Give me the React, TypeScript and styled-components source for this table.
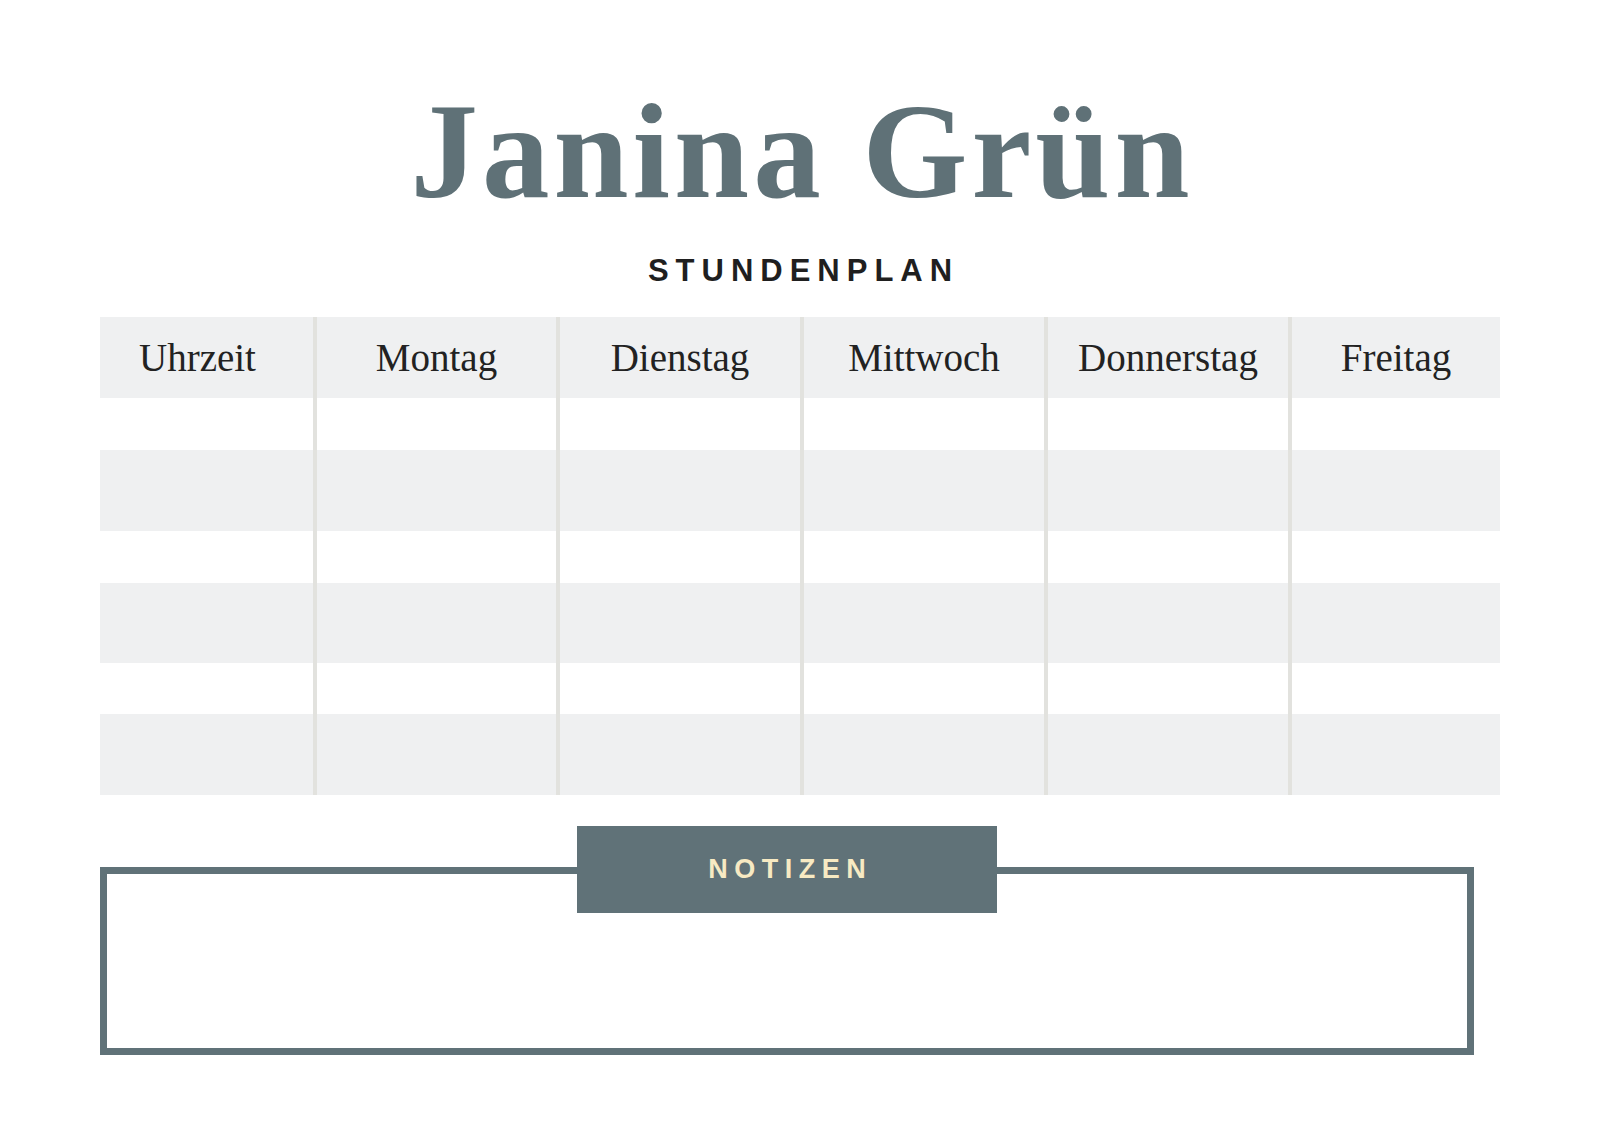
import React, { FC } from "react";
import styled, { createGlobalStyle } from "styled-components";

const GlobalStyle = createGlobalStyle`
  html, body {
    margin: 0;
    padding: 0;
    background: #ffffff;
  }
  body {
    font-family: "Liberation Sans", Arial, sans-serif;
  }
`;

const Page = styled.div`
  width: 1400px;
  margin: 0 auto;
  padding: 84px 0 60px;
  display: flex;
  flex-direction: column;
  align-items: stretch;
`;

const Title = styled.h1`
  margin: 0;
  font-family: "Liberation Serif", "Times New Roman", serif;
  font-weight: 700;
  font-size: 135px;
  line-height: 1;
  color: #5f7177;
  text-align: center;
  letter-spacing: 4px;
  padding-left: 4px;
`;

const Subtitle = styled.div`
  margin-top: 36px;
  font-family: "Liberation Sans", Arial, sans-serif;
  font-weight: 700;
  font-size: 31px;
  line-height: 1;
  letter-spacing: 7px;
  padding-left: 7px;
  color: #1f1f1f;
  text-align: center;
`;

const Table = styled.div`
  margin-top: 31px;
  display: flex;
  flex-direction: column;
`;

const Row = styled.div<{ $shade: boolean; $height: number }>`
  display: grid;
  grid-template-columns: 213px 243px 244px 244px 244px 212px;
  height: ${({ $height }) => $height}px;
  background: ${({ $shade }) => ($shade ? "#eff0f1" : "#ffffff")};
`;

const Cell = styled.div<{ $first?: boolean }>`
  display: flex;
  align-items: center;
  justify-content: center;
  border-left: ${({ $first }) => ($first ? "none" : "4px solid #e2e2de")};
  padding-right: ${({ $first }) => ($first ? "18px" : "0")};
  font-family: "Liberation Serif", "Times New Roman", serif;
  font-size: 39px;
  line-height: 1;
  color: #222222;
`;

const Notes = styled.section`
  margin-top: 31px;
  width: 1374px;
  display: flex;
  flex-direction: column;
  align-items: center;
`;

const NotesTab = styled.div`
  position: relative;
  z-index: 1;
  width: 420px;
  height: 87px;
  background: #607278;
  display: flex;
  align-items: center;
  justify-content: center;
  font-family: "Liberation Sans", Arial, sans-serif;
  font-weight: 700;
  font-size: 27px;
  line-height: 1;
  letter-spacing: 6.5px;
  padding-left: 6.5px;
  box-sizing: border-box;
  color: #f7eac3;
`;

const NotesBox = styled.div`
  align-self: stretch;
  margin-top: -46px;
  height: 188px;
  box-sizing: border-box;
  border: 7px solid #607278;
  background: #ffffff;
`;

const days = ["Uhrzeit", "Montag", "Dienstag", "Mittwoch", "Donnerstag", "Freitag"];
const bodyRows = [
  { shade: false, height: 52 },
  { shade: true, height: 81 },
  { shade: false, height: 52 },
  { shade: true, height: 80 },
  { shade: false, height: 51 },
  { shade: true, height: 81 },
];

const App: FC = () => {
  return (
    <>
      <GlobalStyle />
      <Page>
        <Title>Janina Grün</Title>
        <Subtitle>STUNDENPLAN</Subtitle>
        <Table>
          <Row $shade $height={81}>
            {days.map((d, i) => (
              <Cell key={d} $first={i === 0}>
                {d}
              </Cell>
            ))}
          </Row>
          {bodyRows.map((r, ri) => (
            <Row key={ri} $shade={r.shade} $height={r.height}>
              {days.map((d, i) => (
                <Cell key={d} $first={i === 0} />
              ))}
            </Row>
          ))}
        </Table>
        <Notes>
          <NotesTab>NOTIZEN</NotesTab>
          <NotesBox />
        </Notes>
      </Page>
    </>
  );
};

export default App;
